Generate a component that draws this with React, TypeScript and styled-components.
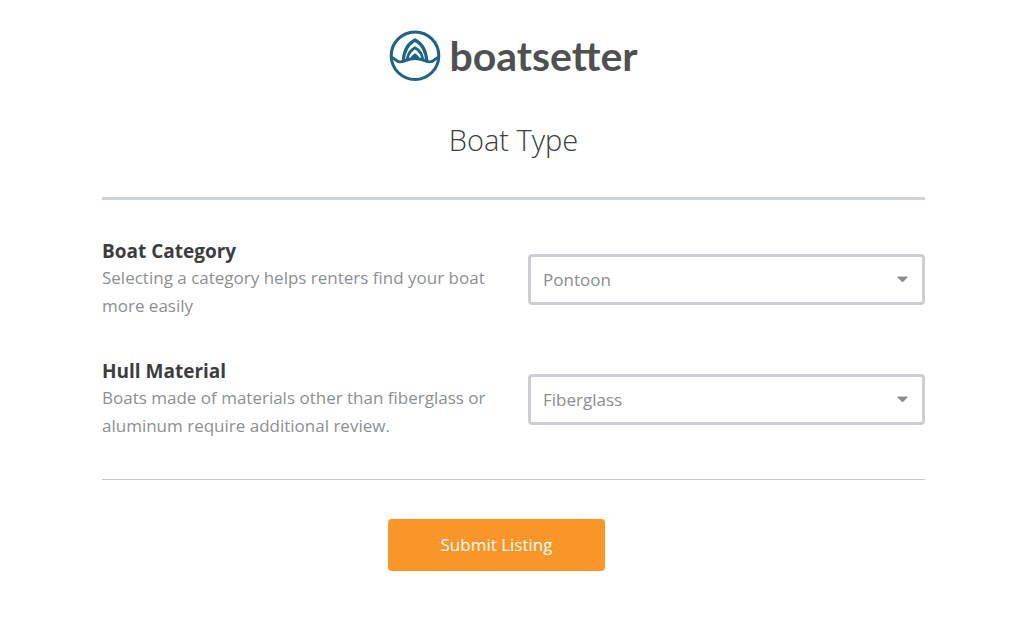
import React from "react";
import styled, { createGlobalStyle } from "styled-components";

const GlobalStyle = createGlobalStyle`
  *, *::before, *::after { box-sizing: border-box; }
  body {
    margin: 0;
    background: #fff;
    color: #3b3d3e;
    font-family: "Open Sans", "Noto Sans", sans-serif;
  }
`;

const Page = styled.main`
  padding: 30px 99px 66px 102px;
`;

const Brand = styled.header`
  display: flex;
  justify-content: center;
  align-items: center;
  gap: 8px;
`;

const BrandMark = styled.svg`
  width: 52px;
  height: 52px;
  flex: none;
`;

const BrandName = styled.span`
  font-family: Lato, sans-serif;
  font-size: 41px;
  line-height: 50px;
  font-weight: 700;
  color: #4f5052;
`;

const Title = styled.h1`
  margin: 36px 0 36px;
  text-align: center;
  font-size: 29px;
  line-height: 43px;
  font-weight: 300;
`;

const Fields = styled.section`
  display: grid;
  gap: 38px;
  padding: 38px 0 39px;
  border-top: 3px solid #cdd1d5;
  border-bottom: 1px solid #c6c9d0;
`;

const Field = styled.div`
  display: grid;
  grid-template-columns: 1fr 1fr;
  column-gap: 29px;
  align-items: center;
`;

const FieldLabel = styled.label`
  display: block;
  font-size: 19px;
  line-height: 26px;
  font-weight: 700;
`;

const Hint = styled.p`
  margin: 0;
  font-size: 17px;
  line-height: 28px;
  color: #8b8f92;
`;

const SelectBox = styled.div`
  position: relative;
`;

const Select = styled.select`
  display: block;
  width: 100%;
  height: 51px;
  padding: 0 40px 0 12px;
  appearance: none;
  border: 3px solid #cbcfd4;
  border-radius: 4px;
  background: #fff;
  color: #8b8d8f;
  font-family: inherit;
  font-size: 17px;
`;

const Caret = styled.svg`
  position: absolute;
  top: 22px;
  right: 17px;
  width: 11px;
  height: 7px;
  pointer-events: none;
`;

const Actions = styled.footer`
  display: flex;
  justify-content: center;
  padding: 39px 34px 0 0;
`;

const SubmitButton = styled.button`
  width: 217px;
  height: 52px;
  padding: 0 0 2px;
  border: 0;
  border-radius: 4px;
  background: #fa9628;
  color: #fff;
  font-family: inherit;
  font-size: 17px;
  cursor: pointer;
`;

type SelectFieldProps = {
  id: string;
  label: string;
  hint: string;
  options: string[];
};

function SelectField({ id, label, hint, options }: SelectFieldProps) {
  return (
    <Field>
      <div>
        <FieldLabel htmlFor={id}>{label}</FieldLabel>
        <Hint id={`${id}-hint`}>{hint}</Hint>
      </div>
      <SelectBox>
        <Select id={id} aria-describedby={`${id}-hint`} defaultValue={options[0]}>
          {options.map((option) => (
            <option key={option}>{option}</option>
          ))}
        </Select>
        <Caret viewBox="0 0 11 7" aria-hidden="true">
          <path d="M1 .5h9q1 .2.4 1L6.300 5.700q-.8.700-1.600 0L.6 1.500Q0 .7 1 .5z" fill="#8b8d8f" />
        </Caret>
      </SelectBox>
    </Field>
  );
}

export default function App() {
  return (
    <>
      <GlobalStyle />
      <Page>
        <Brand>
          <BrandMark viewBox="0 0 52 52" fill="none" stroke="#1c6488" aria-hidden="true">
            <circle cx="26" cy="25.700" r="23.800" strokeWidth="3" />
            <path d="M2.500 27.500C6 28 7 31.800 11 31.800C16.500 31.800 18 28.500 26 28.500C34 28.500 35.500 31.800 41 31.800C45 31.800 46 28 49.500 27.500" strokeWidth="2.800" />
            <path d="M14.300 31C14.800 21.500 18.500 14 26 10C33.500 14 37.200 21.500 37.700 31" strokeWidth="3.200" />
            <path d="M18 30C18.800 24.500 21.500 20.300 26 17.800C30.500 20.300 33.200 24.500 34 30" strokeWidth="2.800" />
            <path d="M21 29C22 26.500 23.500 24.700 26 23.300C28.500 24.700 30 26.500 31 29Z" fill="#1c6488" stroke="none" />
          </BrandMark>
          <BrandName>boatsetter</BrandName>
        </Brand>
        <Title>Boat Type</Title>
        <form onSubmit={(event) => event.preventDefault()}>
          <Fields>
            <SelectField
              id="boat-category"
              label="Boat Category"
              hint="Selecting a category helps renters find your boat more easily"
              options={["Pontoon"]}
            />
            <SelectField
              id="hull-material"
              label="Hull Material"
              hint="Boats made of materials other than fiberglass or aluminum require additional review."
              options={["Fiberglass"]}
            />
          </Fields>
          <Actions>
            <SubmitButton type="submit">Submit Listing</SubmitButton>
          </Actions>
        </form>
      </Page>
    </>
  );
}
